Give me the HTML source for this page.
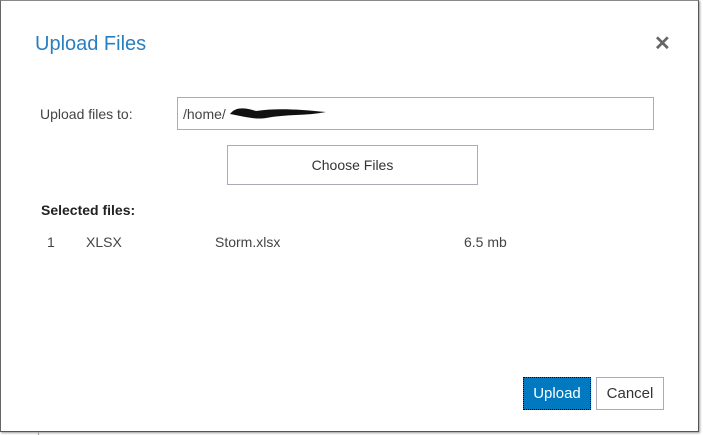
<!DOCTYPE html>
<html><head><style>
body{margin:0;width:703px;height:435px;background:#fff;position:relative;overflow:hidden;font-family:"Liberation Sans",sans-serif;}
.dlg{position:absolute;left:0;top:0;width:697px;height:430px;border:1px solid #555;border-top-color:#888;border-left-color:#666;background:#fff;box-shadow:1px 1px 2px #999;}
.t{position:absolute;left:34px;top:32px;font-size:20px;color:#2a7fc0;}
.x{position:absolute;left:653px;top:30px;font-size:20px;font-weight:bold;color:#666;}
.l{position:absolute;font-size:14px;color:#444;}
.inp{position:absolute;left:176px;top:96px;width:477px;height:33px;border:1px solid #aab;box-sizing:border-box;}
.btn{position:absolute;box-sizing:border-box;border:1px solid #aab;background:#fff;font-size:14px;color:#333;text-align:center;}
</style></head><body>
<div class="dlg">
<div class="t">Upload Files</div>
<div class="x">✕</div>
<div class="l" style="left:39px;top:105px">Upload files to:</div>
<div class="inp"><span class="l" style="left:5px;top:8px">/home/</span>
<svg style="position:absolute;left:48px;top:6px" width="110" height="18"><path d="M4 10 C10 2,20 4,30 7 C50 4,70 5,100 8 C80 12,60 10,40 14 C30 16,15 12,4 10 Z" fill="#111"/></svg></div>
<div class="btn" style="left:226px;top:144px;width:251px;height:40px;line-height:38px">Choose Files</div>
<div class="l" style="left:40px;top:201px;font-weight:bold;color:#222">Selected files:</div>
<div class="l" style="left:46px;top:233px">1</div>
<div class="l" style="left:85px;top:233px">XLSX</div>
<div class="l" style="left:214px;top:233px">Storm.xlsx</div>
<div class="l" style="left:463px;top:233px">6.5 mb</div>
<div class="btn" style="left:522px;top:376px;width:68px;height:33px;line-height:31px;background:#0079c1;color:#fff;border:1px dotted #003;font-size:15px">Upload</div>
<div class="btn" style="left:595px;top:376px;width:68px;height:33px;line-height:31px;font-size:15px">Cancel</div>
</div>
<div style="position:absolute;left:38px;top:432px;width:1px;height:3px;background:#999"></div>
</body></html>
